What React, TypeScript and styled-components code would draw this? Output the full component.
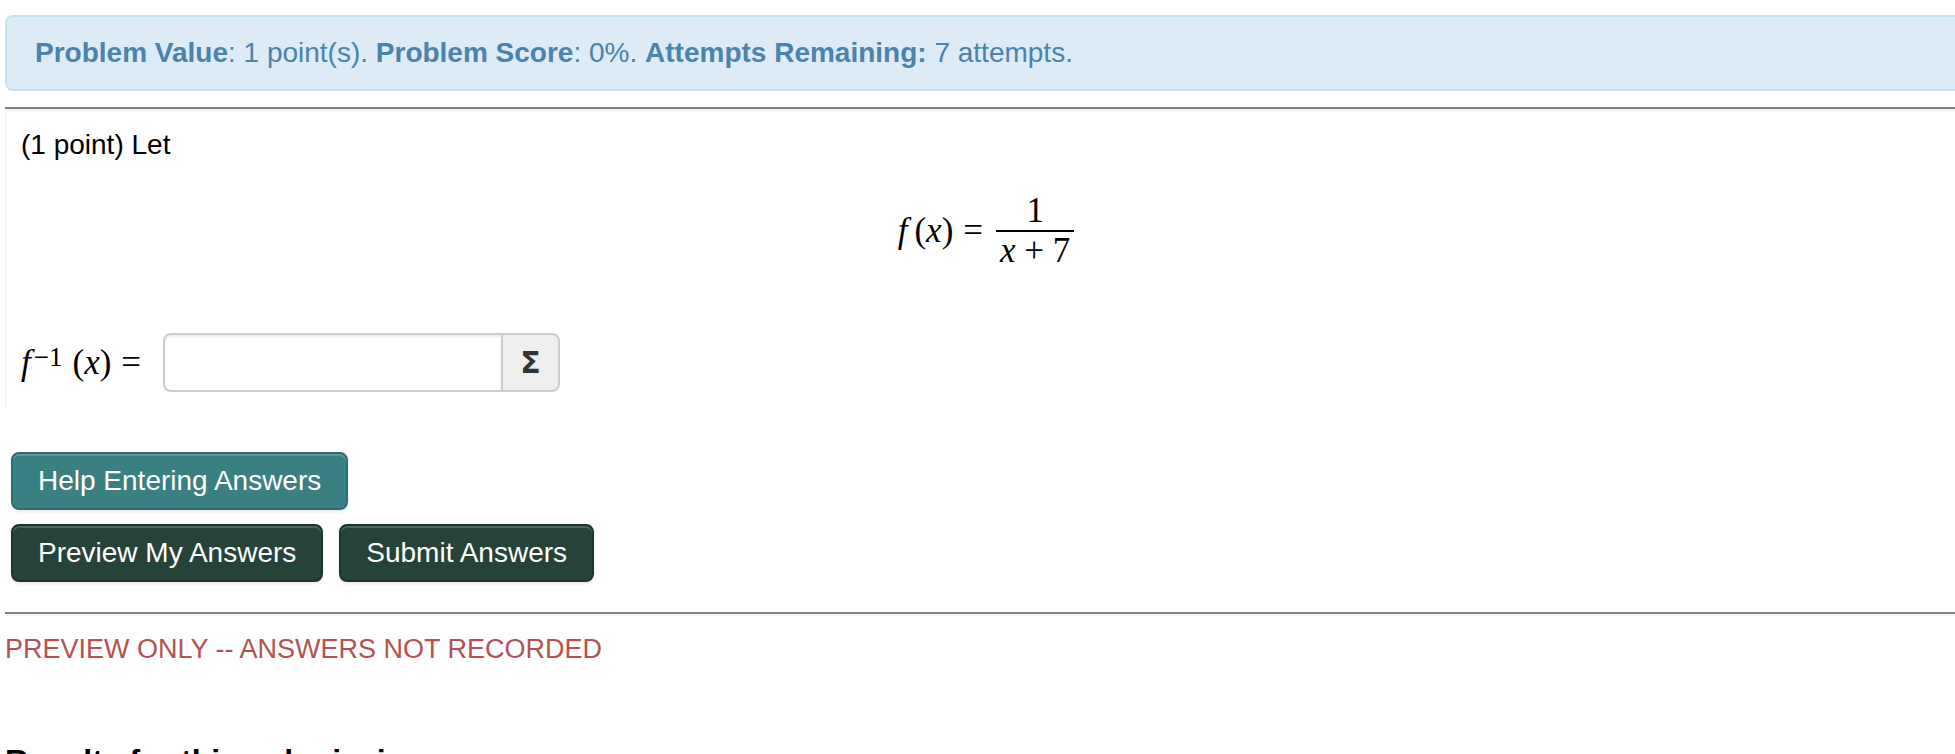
import React from "react";
import styled, { createGlobalStyle } from "styled-components";

const Global = createGlobalStyle`
  html, body {
    margin: 0;
    padding: 0;
    overflow-x: hidden;
    background: #ffffff;
  }
  body {
    font-family: "Liberation Sans", Arial, Helvetica, sans-serif;
    font-size: 28px;
    line-height: 40px;
    color: #000;
  }
`;

const Page = styled.div`
  width: 1960px;
  padding: 15px 0 0 5px;
`;

const Alert = styled.div`
  box-sizing: border-box;
  height: 76px;
  padding: 16px 70px 16px 28px;
  background: #dcebf6;
  border: 2px solid #c2e3ee;
  border-radius: 8px;
  color: #4a83ab;
  line-height: 40px;
  white-space: nowrap;
`;

const B = styled.b`
  font-weight: bold;
`;

const Rule = styled.div<{ $top: number }>`
  margin-top: ${(p) => p.$top}px;
  height: 0;
  border-top: 2px solid #808080;
  box-shadow: 0 2px 2px rgba(0, 0, 0, 0.06);
`;

const ProblemBox = styled.div`
  padding: 16px 14px 17px 14px;
  border-left: 2px solid #f6f6f6;
`;

const Para = styled.div`
  line-height: 40px;
`;

const MathRow = styled.div`
  margin-top: 27px;
  display: flex;
  justify-content: center;
  align-items: center;
  font-family: "Liberation Serif", "Times New Roman", serif;
  font-size: 35px;
  color: #000;
`;

const I = styled.i`
  font-style: italic;
`;

const Op = styled.span`
  padding: 0 10px;
`;

const Frac = styled.span`
  display: inline-flex;
  flex-direction: column;
  align-items: stretch;
  text-align: center;
  margin-left: 3px;
`;

const Num = styled.span`
  line-height: 38px;
  padding: 0 4px;
  white-space: nowrap;
`;

const Bar = styled.span`
  height: 2px;
  background: #000;
`;

const AnswerRow = styled.div`
  margin-top: 63px;
  display: flex;
  align-items: center;
  height: 59px;
`;

const Label = styled.span`
  font-family: "Liberation Serif", "Times New Roman", serif;
  font-size: 35px;
  white-space: nowrap;
  display: inline-flex;
  align-items: baseline;
`;

const Sup = styled.sup`
  font-size: 27px;
  line-height: 0;
  position: relative;
  top: -8px;
  margin-left: 3px;
  margin-right: 10px;
`;

const Eq = styled.span`
  margin-left: 10px;
`;

const InputGroup = styled.div`
  margin-left: 22px;
  display: flex;
  height: 59px;
`;

const Field = styled.div`
  box-sizing: border-box;
  width: 338px;
  height: 59px;
  border: 2px solid #cccccc;
  border-right: none;
  border-radius: 8px 0 0 8px;
  background: #fff;
  box-shadow: inset 0 2px 2px rgba(0, 0, 0, 0.075);
`;

const Addon = styled.div`
  box-sizing: border-box;
  width: 59px;
  height: 59px;
  border: 2px solid #cccccc;
  border-radius: 0 8px 8px 0;
  background: #eeeeee;
  display: flex;
  align-items: center;
  justify-content: center;
  font-family: "DejaVu Sans", "Liberation Sans", sans-serif;
  font-weight: bold;
  font-size: 30px;
  color: #333;
`;

const BtnRow = styled.div<{ $top: number }>`
  margin-top: ${(p) => p.$top}px;
  display: flex;
  gap: 16px;
  padding-left: 6px;
`;

const Btn = styled.button<{ $variant: "info" | "dark" }>`
  box-sizing: border-box;
  height: 58px;
  padding: 7px 25px;
  font-family: "Liberation Sans", Arial, Helvetica, sans-serif;
  font-size: 28px;
  line-height: 40px;
  color: #ffffff;
  border-radius: 8px;
  cursor: pointer;
  border: 2px solid ${(p) => (p.$variant === "info" ? "#2f6e70" : "#1c362e")};
  background: ${(p) => (p.$variant === "info" ? "#3a8082" : "#26433a")};
  box-shadow: inset 0 2px 0 rgba(255, 255, 255, 0.18), 0 2px 3px rgba(0, 0, 0, 0.08);
  white-space: nowrap;
`;

const Preview = styled.div`
  margin-top: 15px;
  color: #b5524f;
  font-size: 27px;
  line-height: 40px;
`;

const Heading = styled.h3`
  margin: 72px 0 0 0;
  font-size: 32px;
  line-height: 40px;
  font-weight: bold;
  color: #000;
`;

export default function App() {
  return (
    <>
      <Global />
      <Page>
        <Alert>
          <B>Problem Value</B>: 1 point(s). <B>Problem Score</B>: 0%.{" "}
          <B>Attempts Remaining:</B> 7 attempts.
        </Alert>
        <Rule $top={16} />
        <ProblemBox>
          <Para>(1 point) Let</Para>
          <MathRow>
            <I>f</I>
            <span>&thinsp;(</span>
            <I>x</I>
            <span>)</span>
            <Op>=</Op>
            <Frac>
              <Num>1</Num>
              <Bar />
              <Num>
                <I>x</I> + 7
              </Num>
            </Frac>
          </MathRow>
          <AnswerRow>
            <Label>
              <I>f</I>
              <Sup>−1</Sup>
              <span>(</span>
              <I>x</I>
              <span>)</span>
              <Eq>=</Eq>
            </Label>
            <InputGroup>
              <Field />
              <Addon>Σ</Addon>
            </InputGroup>
          </AnswerRow>
        </ProblemBox>
        <BtnRow $top={43}>
          <Btn $variant="info">Help Entering Answers</Btn>
        </BtnRow>
        <BtnRow $top={14}>
          <Btn $variant="dark">Preview My Answers</Btn>
          <Btn $variant="dark">Submit Answers</Btn>
        </BtnRow>
        <Rule $top={30} />
        <Preview>PREVIEW ONLY -- ANSWERS NOT RECORDED</Preview>
        <Heading>Results for this submission</Heading>
      </Page>
    </>
  );
}
